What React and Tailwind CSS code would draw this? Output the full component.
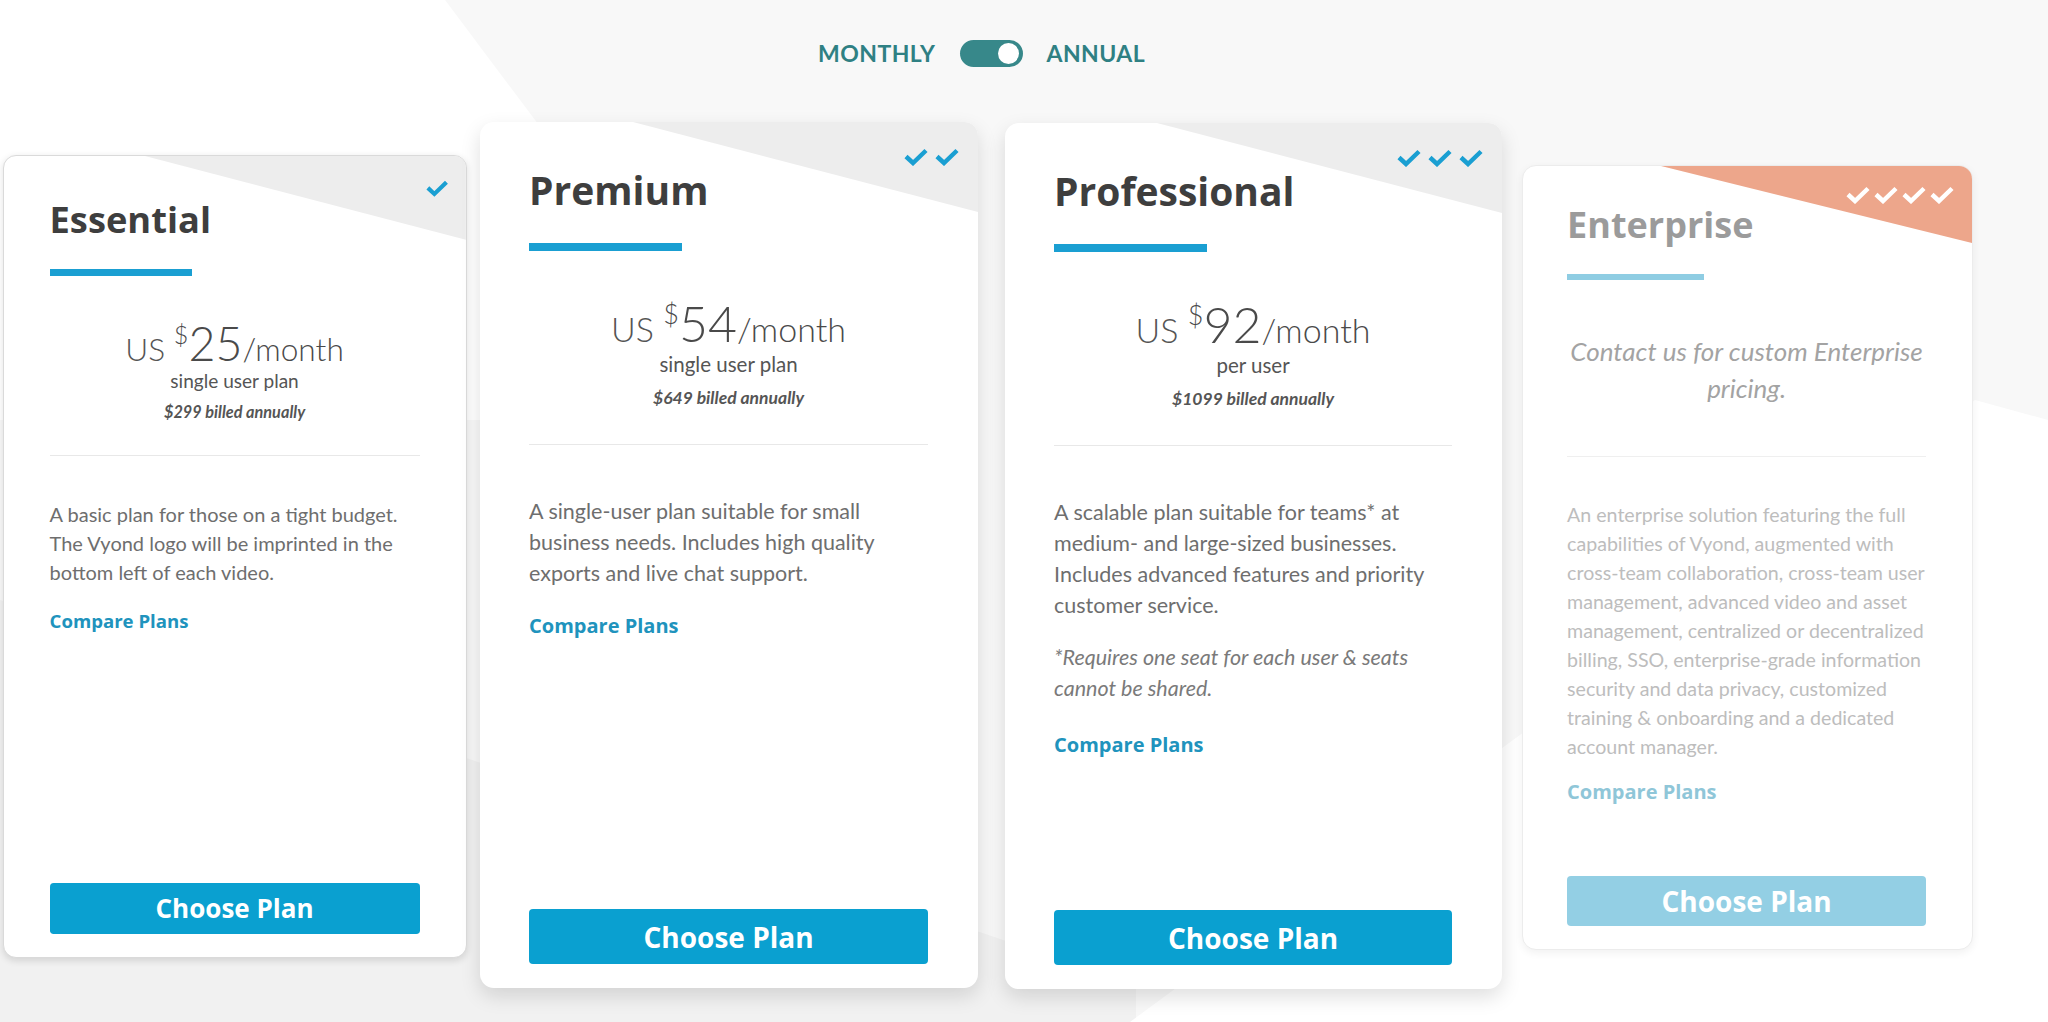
import React from "react";

const plans = [
  {
    name: "Essential",
    price: "25",
    unit: "single user plan",
    billed: "$299 billed annually",
    checks: 1,
    wrap: "ml-[3px] mt-[33px]",
    card: "w-[499px] h-[863px] [zoom:0.93] border border-[#dadada] shadow-[0_3px_8px_rgba(0,0,0,0.12)]",
    gap: "mt-[47px]",
    desc: [
      "A basic plan for those on a tight budget.",
      "The Vyond logo will be imprinted in the",
      "bottom left of each video.",
    ],
  },
  {
    name: "Premium",
    price: "54",
    unit: "single user plan",
    billed: "$649 billed annually",
    checks: 2,
    wrap: "ml-[13px]",
    card: "w-[498px] h-[866px] shadow-[0_8px_20px_rgba(0,0,0,0.13)]",
    gap: "mt-[51px]",
    desc: [
      "A single-user plan suitable for small",
      "business needs. Includes high quality",
      "exports and live chat support.",
    ],
  },
  {
    name: "Professional",
    price: "92",
    unit: "per user",
    billed: "$1099 billed annually",
    checks: 3,
    wrap: "ml-[27px] mt-[1px]",
    card: "w-[497px] h-[866px] shadow-[0_8px_20px_rgba(0,0,0,0.13)]",
    gap: "mt-[51px]",
    desc: [
      "A scalable plan suitable for teams* at",
      "medium- and large-sized businesses.",
      "Includes advanced features and priority",
      "customer service.",
    ],
    note: ["*Requires one seat for each user & seats", "cannot be shared."],
  },
];

const enterpriseDesc = [
  "An enterprise solution featuring the full",
  "capabilities of Vyond, augmented with",
  "cross-team collaboration, cross-team user",
  "management, advanced video and asset",
  "management, centralized or decentralized",
  "billing, SSO, enterprise-grade information",
  "security and data privacy, customized",
  "training & onboarding and a dedicated",
  "account manager.",
];

const Check = ({ color }) => (
  <svg width="24" height="18" viewBox="0 0 24 18" fill="none">
    <path d="M2 8.5 L9 15 L22 2.5" stroke={color} strokeWidth="4.5" />
  </svg>
);

const PlanCard = ({ plan }) => (
  <div className={plan.wrap}>
    <div
      className={`relative flex flex-col overflow-hidden rounded-[14px] bg-white pl-[49px] pr-[50px] pt-[48px] pb-[24px] ${plan.card}`}
    >
      {/* grey corner */}
      <svg
        className="absolute right-0 top-0"
        width="345"
        height="90"
        viewBox="0 0 345 90"
      >
        <polygon points="0,0 345,0 345,90" fill="#ededed" />
      </svg>
      <div className="absolute right-[19px] top-[26px] flex gap-[7px]">
        {[...Array(plan.checks)].map((_, i) => (
          <Check key={i} color="#1a9fd2" />
        ))}
      </div>

      <h2 className="relative font-['Open_Sans',sans-serif] text-[39px] font-bold leading-none text-[#3e3e3e]">
        {plan.name}
      </h2>
      <div className="mt-[34px] h-[8px] w-[153px] bg-[#1a9fd2]" />

      {/* price */}
      <div className="mt-[48px] h-[48px] text-center text-[50px] font-light leading-[48px] text-[#4a4a4a]">
        <span className="text-[34px] leading-none text-[#555]">US </span>
        <span className="relative -top-[18px] text-[27px] leading-none">$</span>
        <span>{plan.price}</span>
        <span className="text-[34px] leading-none">/month</span>
      </div>
      <div className="mt-[2px] text-center text-[20.5px] leading-[31px] text-[#555]">
        {plan.unit}
      </div>
      <div className="mt-[2px] text-center text-[17.5px] font-bold italic leading-[31px] text-[#555]">
        {plan.billed}
      </div>
      <div className="mt-[31px] h-px bg-[#e8e8e8]" />

      <p className={`${plan.gap} text-[21.5px] leading-[31px] text-[#6e6e6e]`}>
        {plan.desc.map((l) => (
          <span key={l} className="block whitespace-nowrap">
            {l}
          </span>
        ))}
      </p>
      {plan.note && (
        <p className="mt-[21px] mb-[4px] text-[21.5px] italic leading-[31px] text-[#7a7a7a]">
          {plan.note.map((l) => (
            <span key={l} className="block whitespace-nowrap">
              {l}
            </span>
          ))}
        </p>
      )}
      <a className="mt-[22px] font-['Open_Sans',sans-serif] text-[20px] font-bold leading-[30px] text-[#2093bd]">
        Compare Plans
      </a>

      <button className="mt-auto h-[55px] w-full shrink-0 rounded-[4px] bg-[#0aa0d0] font-['Open_Sans',sans-serif] text-[28px] font-bold text-white">
        Choose Plan
      </button>
    </div>
  </div>
);

const EnterpriseCard = () => (
  <div className="ml-[20px] mt-[43px]">
    <div className="relative flex h-[785px] w-[451px] flex-col overflow-hidden rounded-[14px] border border-[#ececec] bg-white pl-[44px] pr-[46px] pt-[41px] pb-[23px] shadow-[0_3px_8px_rgba(0,0,0,0.06)]">
      <svg
        className="absolute right-0 top-0"
        width="311"
        height="77"
        viewBox="0 0 311 77"
      >
        <polygon points="0,0 311,0 311,77" fill="#eda68b" />
      </svg>
      <div className="absolute right-[18px] top-[20px] flex gap-[4px]">
        {[0, 1, 2, 3].map((i) => (
          <Check key={i} color="#ffffff" />
        ))}
      </div>

      <h2 className="relative font-['Open_Sans',sans-serif] text-[36px] font-bold leading-none text-[#9b9b9b]">
        Enterprise
      </h2>
      <div className="mt-[31px] h-[6px] w-[137px] bg-[#8fcde3]" />

      <p className="mt-[53px] text-center text-[26px] italic leading-[37px] text-[#a3a3a3]">
        Contact us for custom Enterprise pricing.
      </p>
      <div className="mt-[49px] h-px bg-[#efefef]" />

      <p className="mt-[43px] text-[19.6px] leading-[29px] text-[#bdbdbd]">
        {enterpriseDesc.map((l) => (
          <span key={l} className="block whitespace-nowrap">
            {l}
          </span>
        ))}
      </p>
      <a className="mt-[16px] font-['Open_Sans',sans-serif] text-[20px] font-bold leading-[30px] text-[#8fc6d8]">
        Compare Plans
      </a>

      <button className="mt-auto h-[50px] w-full shrink-0 rounded-[4px] bg-[#93cfe4] font-['Open_Sans',sans-serif] text-[28px] font-bold text-white">
        Choose Plan
      </button>
    </div>
  </div>
);

const App = () => {
  return (
    <div className="relative h-[1022px] w-full overflow-hidden bg-[#f8f8f8] font-['Lato',sans-serif]">
      {/* background shapes */}
      <svg
        className="absolute inset-0 h-full w-full"
        viewBox="0 0 2048 1022"
        preserveAspectRatio="none"
      >
        <polygon points="0,0 445,0 760,420 0,420" fill="#ffffff" />
        <polygon points="0,600 1136,985 1136,1022 0,1022" fill="#f1f1f1" />
        <polygon points="1130,1022 2048,1022 2048,420 1975,400" fill="#ffffff" />
      </svg>

      <div className="relative">
        {/* billing toggle */}
        <div className="flex items-center gap-[25px] pl-[818px] pt-[40px] text-[23px] font-bold leading-none tracking-[0.02em] text-[#2f8083]">
          <span>MONTHLY</span>
          <div className="flex h-[27px] w-[63px] items-center justify-end rounded-full bg-[#37888a] pr-[4px]">
            <div className="h-[21px] w-[21px] rounded-full bg-white" />
          </div>
          <span className="-ml-[2px]">ANNUAL</span>
        </div>

        {/* plans */}
        <div className="mt-[55px] flex items-start">
          {plans.map((p) => (
            <PlanCard key={p.name} plan={p} />
          ))}
          <EnterpriseCard />
        </div>
      </div>
    </div>
  );
};

export default App;
